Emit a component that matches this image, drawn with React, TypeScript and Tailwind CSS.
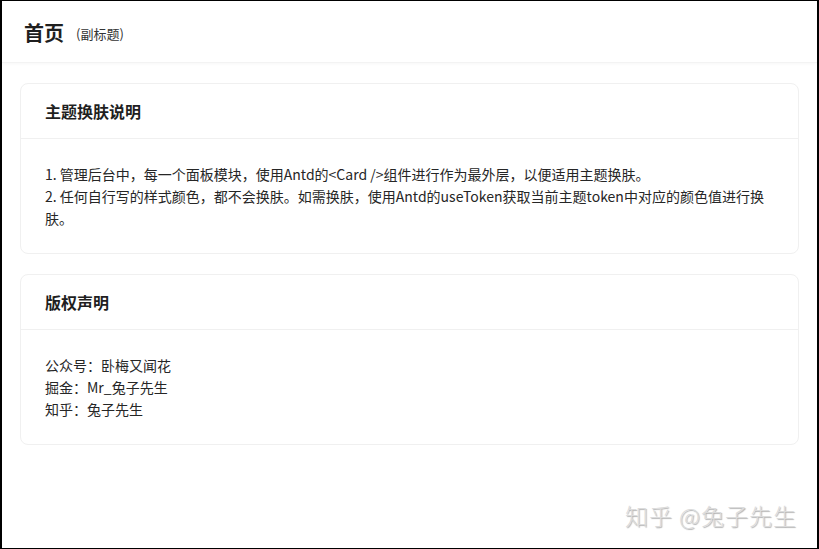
import React from "react";

const font = {
  fontFamily: '"Noto Sans CJK SC", "Noto Sans", "Liberation Sans", sans-serif',
};

interface CardProps {
  title: string;
  lines: string[];
}

const Card: React.FC<CardProps> = ({ title, lines }) => (
  <div className="rounded-lg border border-[#f0f0f0] bg-white">
    <div className="flex h-[55px] items-center border-b border-[#f0f0f0] px-6">
      <h3 className="text-[16px] font-semibold text-[#1f1f1f]">{title}</h3>
    </div>
    <div className="px-6 py-6 text-[14px] leading-[22px] text-[#262626]">
      {lines.map((l, i) => (
        <div key={i}>{l}</div>
      ))}
    </div>
  </div>
);

export default function App() {
  return (
    <div
      style={font}
      className="relative flex h-[549px] w-[819px] flex-col overflow-hidden border-t border-r-2 border-b border-l-2 border-black bg-white"
    >
      {/* 页头 */}
      <div className="flex h-[62px] shrink-0 items-center gap-3 border-b border-[#f3f3f3] pl-[22px] shadow-[0_1px_3px_rgba(0,0,0,0.03)]">
        <h1 className="pt-[2px] text-[20px] font-bold text-[#1f1f1f]">首页</h1>
        <span className="pt-[5px] text-[13px] text-[#333]">(副标题)</span>
      </div>

      {/* 内容 */}
      <div className="flex flex-col gap-5 px-[18px] pt-5">
        <Card
          title="主题换肤说明"
          lines={[
            "1. 管理后台中，每一个面板模块，使用Antd的<Card />组件进行作为最外层，以便适用主题换肤。",
            "2. 任何自行写的样式颜色，都不会换肤。如需换肤，使用Antd的useToken获取当前主题token中对应的颜色值进行换肤。",
          ]}
        />
        <Card
          title="版权声明"
          lines={["公众号：卧梅又闻花", "掘金：Mr_兔子先生", "知乎：兔子先生"]}
        />
      </div>

      {/* 水印 */}
      <div className="absolute right-[20px] bottom-[16px] text-[23px] font-light tracking-[1px] text-[#dcdcdc] [text-shadow:1px_1px_1px_rgba(0,0,0,0.3)]">
        知乎 @兔子先生
      </div>
    </div>
  );
}
